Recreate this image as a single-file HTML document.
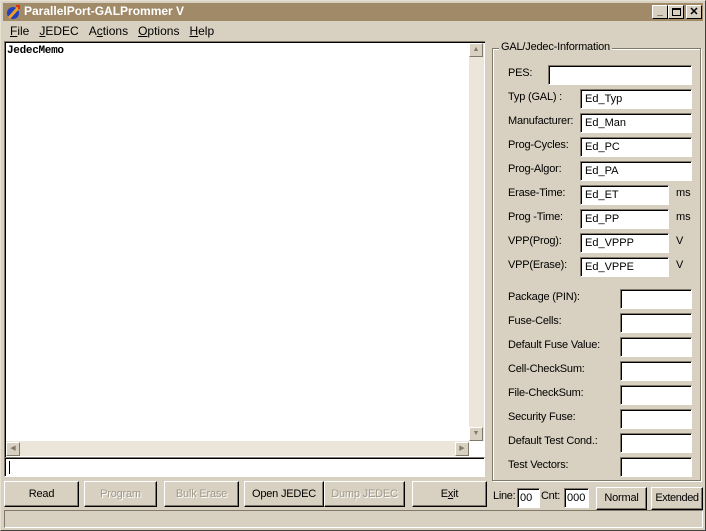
<!DOCTYPE html>
<html><head><meta charset="utf-8"><style>
*{box-sizing:border-box;margin:0;padding:0}
body{width:706px;height:531px;background:#d8d0c0;font-family:"Liberation Sans",sans-serif;font-size:11px;color:#000;position:relative;overflow:hidden}
.a{position:absolute}
.ed{position:absolute;background:#fff;border-top:1px solid #807868;border-left:1px solid #807868;border-right:1px solid #fff;border-bottom:1px solid #fff;box-shadow:inset 1px 1px 0 #000;height:20px;padding:3px 0 0 4px;font-size:11px}
.lb{position:absolute;left:508px;font-size:11px;letter-spacing:-0.2px}
.bt{position:absolute;top:481px;height:26px;border:1px solid;border-color:#fff #000 #000 #fff;box-shadow:inset -1px -1px 0 #807868;text-align:center;line-height:24px;font-size:11px;letter-spacing:-0.2px}
.dis{color:#a09888;text-shadow:1px 1px 0 #fff}
.sb{position:absolute;background:#d8d0c0;border:1px solid;border-color:#fff #807868 #807868 #fff;width:14px;height:14px;font-size:7px;line-height:12px;text-align:center;color:#807868}
</style></head><body>
<div class="a" style="left:0;top:0;width:706px;height:531px;border:1px solid;border-color:#e8e0d0 #404040 #404040 #e8e0d0"></div>
<div class="a" style="left:3px;top:3px;width:700px;height:18px;background:#a08a68"></div>
<svg class="a" style="left:5px;top:4px" width="16" height="16"><circle cx="8" cy="9" r="6" fill="#2040c0"/><path d="M4 14 L13 4" stroke="#f0a020" stroke-width="3"/><path d="M11 2 l3 0 l0 3" stroke="#e03010" stroke-width="2" fill="none"/></svg>
<div class="a" style="left:24px;top:4px;color:#fff;font-weight:bold;font-size:12px">ParallelPort-GALPrommer V</div>
<div class="a" style="left:652px;top:5px;width:16px;height:14px;background:#d8d0c0;border:1px solid;border-color:#fff #000 #000 #fff;font-weight:bold;text-align:center;line-height:12px;font-size:10px">_</div>
<div class="a" style="left:668px;top:5px;width:16px;height:14px;background:#d8d0c0;border:1px solid;border-color:#fff #000 #000 #fff"><div style="margin:2px 3px;width:9px;height:8px;border:1px solid #000;border-top-width:2px"></div></div>
<div class="a" style="left:686px;top:5px;width:16px;height:14px;background:#d8d0c0;border:1px solid;border-color:#fff #000 #000 #fff;font-weight:bold;text-align:center;line-height:12px;font-size:11px">✕</div>
<div class="a" style="left:10px;top:24px;font-size:12px"><u>F</u>ile&nbsp;&nbsp;&nbsp;<u>J</u>EDEC&nbsp;&nbsp;&nbsp;A<u>c</u>tions&nbsp;&nbsp;&nbsp;<u>O</u>ptions&nbsp;&nbsp;&nbsp;<u>H</u>elp</div>
<div class="a" style="left:4px;top:41px;width:481px;height:416px;background:#fff;border-top:1px solid #807868;border-left:1px solid #807868;box-shadow:inset 1px 1px 0 #000"></div>
<div class="a" style="left:7px;top:45px;font-family:'Liberation Mono',monospace;font-size:11px;font-weight:bold;letter-spacing:-0.3px">JedecMemo</div>
<div class="a" style="left:469px;top:43px;width:15px;height:398px;background:#ece6da"></div>
<div class="sb" style="left:469px;top:43px">▲</div>
<div class="sb" style="left:469px;top:427px">▼</div>
<div class="a" style="left:6px;top:441px;width:463px;height:15px;background:#ece6da"></div>
<div class="sb" style="left:6px;top:442px">◀</div>
<div class="sb" style="left:455px;top:442px">▶</div>
<div class="ed" style="left:4px;top:457px;width:481px;height:20px"><span style="border-left:1px solid #000;height:13px;display:inline-block"></span></div>
<div class="a" style="left:492px;top:48px;width:209px;height:433px;border:1px solid #807868;box-shadow:1px 1px 0 #fff,inset 1px 1px 0 #fff"></div>
<div class="a" style="left:499px;top:41px;background:#d8d0c0;padding:0 2px;letter-spacing:-0.2px">GAL/Jedec-Information</div>
<div class="lb" style="top:67px">PES:</div><div class="ed" style="left:548px;top:65px;width:144px"></div>
<div class="lb" style="top:91px">Typ (GAL) :</div><div class="ed" style="left:580px;top:89px;width:112px">Ed_Typ</div>
<div class="lb" style="top:115px">Manufacturer:</div><div class="ed" style="left:580px;top:113px;width:112px">Ed_Man</div>
<div class="lb" style="top:139px">Prog-Cycles:</div><div class="ed" style="left:580px;top:137px;width:112px">Ed_PC</div>
<div class="lb" style="top:163px">Prog-Algor:</div><div class="ed" style="left:580px;top:161px;width:112px">Ed_PA</div>
<div class="lb" style="top:187px">Erase-Time:</div><div class="ed" style="left:580px;top:185px;width:89px">Ed_ET</div><div class="a" style="left:676px;top:187px">ms</div>
<div class="lb" style="top:211px">Prog -Time:</div><div class="ed" style="left:580px;top:209px;width:89px">Ed_PP</div><div class="a" style="left:676px;top:211px">ms</div>
<div class="lb" style="top:235px">VPP(Prog):</div><div class="ed" style="left:580px;top:233px;width:89px">Ed_VPPP</div><div class="a" style="left:676px;top:235px">V</div>
<div class="lb" style="top:259px">VPP(Erase):</div><div class="ed" style="left:580px;top:257px;width:89px">Ed_VPPE</div><div class="a" style="left:676px;top:259px">V</div>
<div class="lb" style="top:291px">Package (PIN):</div><div class="ed" style="left:620px;top:289px;width:72px"></div>
<div class="lb" style="top:315px">Fuse-Cells:</div><div class="ed" style="left:620px;top:313px;width:72px"></div>
<div class="lb" style="top:339px">Default Fuse Value:</div><div class="ed" style="left:620px;top:337px;width:72px"></div>
<div class="lb" style="top:363px">Cell-CheckSum:</div><div class="ed" style="left:620px;top:361px;width:72px"></div>
<div class="lb" style="top:387px">File-CheckSum:</div><div class="ed" style="left:620px;top:385px;width:72px"></div>
<div class="lb" style="top:411px">Security Fuse:</div><div class="ed" style="left:620px;top:409px;width:72px"></div>
<div class="lb" style="top:435px">Default Test Cond.:</div><div class="ed" style="left:620px;top:433px;width:72px"></div>
<div class="lb" style="top:459px">Test Vectors:</div><div class="ed" style="left:620px;top:457px;width:72px"></div>
<div class="bt" style="left:4px;width:75px">Read</div>
<div class="bt dis" style="left:84px;width:73px">Program</div>
<div class="bt dis" style="left:164px;width:75px">Bulk Erase</div>
<div class="bt" style="left:244px;width:80px">Open JEDEC</div>
<div class="bt dis" style="left:324px;width:81px">Dump JEDEC</div>
<div class="bt" style="left:412px;width:75px">E<u>x</u>it</div>
<div class="a" style="left:493px;top:490px;font-size:11px;letter-spacing:-0.3px">Line:</div>
<div class="ed" style="left:517px;top:488px;width:23px;font-size:11px;padding-left:2px">00</div>
<div class="a" style="left:541px;top:490px;font-size:11px;letter-spacing:-0.3px">Cnt:</div>
<div class="ed" style="left:564px;top:488px;width:25px;font-size:11px;padding-left:2px">000</div>
<div class="bt" style="left:596px;top:487px;width:51px;height:23px;line-height:21px">Normal</div>
<div class="bt" style="left:651px;top:487px;width:52px;height:23px;line-height:21px;letter-spacing:-0.4px">Extended</div>
<div class="a" style="left:4px;top:510px;width:699px;height:18px;border:1px solid;border-color:#807868 #fff #fff #807868"></div>
</body></html>
